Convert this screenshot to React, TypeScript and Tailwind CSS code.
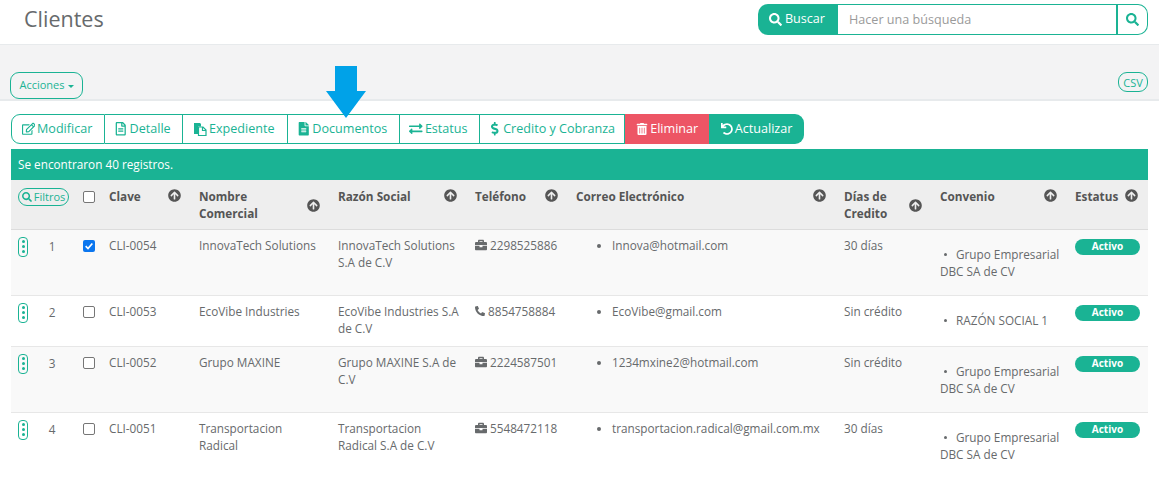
import { ReactNode } from 'react'
import {
  FaArrowCircleUp,
  FaBriefcase,
  FaDollarSign,
  FaExchangeAlt,
  FaFileAlt,
  FaPhoneAlt,
  FaRegEdit,
  FaRegFileAlt,
  FaSearch,
  FaTrashAlt,
  FaUndo
} from 'react-icons/fa'

function FilesIcon() {
  return (
    <svg viewBox="0 0 14 14" className="size-[14px]">
      <path d="M1 1H7L8 2V4.5H5V12H1Z" fill="#1ab394" />
      <path d="M5.5 5H10L13 8V13.500H5.500Z" fill="#fff" stroke="#1ab394" strokeWidth="1.2" />
      <path d="M9.500 5V8.500H13" fill="none" stroke="#1ab394" strokeWidth="1.2" />
    </svg>
  )
}

const ACTIONS = [
  { label: 'Modificar', icon: <FaRegEdit />, width: 'w-[94px]', first: true },
  { label: 'Detalle', icon: <FaRegFileAlt />, width: 'w-[78px]' },
  { label: 'Expediente', icon: <FilesIcon />, width: 'w-[105px]' },
  { label: 'Documentos', icon: <FaFileAlt />, width: 'w-[112px]' },
  { label: 'Estatus', icon: <FaExchangeAlt />, width: 'w-[81px]' },
  { label: 'Credito y Cobranza', icon: <FaDollarSign />, width: 'w-[145px]' }
]

const ROWS = [
  {
    id: 1,
    clave: 'CLI-0054',
    nombre: 'InnovaTech Solutions',
    razon: 'InnovaTech Solutions S.A de C.V',
    phone: '2298525886',
    phoneIcon: 'work',
    correo: 'Innova@hotmail.com',
    dias: '30 días',
    convenio: 'Grupo Empresarial DBC SA de CV',
    height: 'h-[66px]',
    checked: true
  },
  {
    id: 2,
    clave: 'CLI-0053',
    nombre: 'EcoVibe Industries',
    razon: 'EcoVibe Industries S.A de C.V',
    phone: '8854758884',
    phoneIcon: 'phone',
    correo: 'EcoVibe@gmail.com',
    dias: 'Sin crédito',
    convenio: 'RAZÓN SOCIAL 1',
    height: 'h-[51px]',
    checked: false
  },
  {
    id: 3,
    clave: 'CLI-0052',
    nombre: 'Grupo MAXINE',
    razon: 'Grupo MAXINE S.A de C.V',
    phone: '2224587501',
    phoneIcon: 'work',
    correo: '1234mxine2@hotmail.com',
    dias: 'Sin crédito',
    convenio: 'Grupo Empresarial DBC SA de CV',
    height: 'h-[66px]',
    checked: false
  },
  {
    id: 4,
    clave: 'CLI-0051',
    nombre: 'Transportacion Radical',
    razon: 'Transportacion Radical S.A de C.V',
    phone: '5548472118',
    phoneIcon: 'work',
    correo: 'transportacion.radical@gmail.com.mx',
    dias: '30 días',
    convenio: 'Grupo Empresarial DBC SA de CV',
    height: 'h-[66px]',
    checked: false
  }
]

function Th({ children, center }: { children: ReactNode; center?: boolean }) {
  return (
    <th className="pt-[8px] pr-[10px] pb-[6px] pl-2 align-top text-left font-bold text-[#555]">
      <div className={`flex justify-between gap-1 ${center ? 'items-center' : 'items-start'}`}>
        <span className="leading-[17px]">{children}</span>
        <FaArrowCircleUp className={`shrink-0 text-[13px] text-[#555] ${center ? '' : 'mt-[1px]'}`} />
      </div>
    </th>
  )
}

function Checkbox({ checked }: { checked?: boolean }) {
  if (checked) {
    return (
      <span className="flex size-[12px] items-center justify-center rounded-[2px] bg-[#0b76ef]">
        <svg viewBox="0 0 12 12" className="size-[10px]">
          <path d="M2 6.2 4.8 9 10 3" fill="none" stroke="#fff" strokeWidth="2" />
        </svg>
      </span>
    )
  }
  return <span className="block size-[12px] rounded-[2px] border border-[#767676] bg-white" />
}

export default function App() {
  return (
    <div className="relative h-[478px] w-[1159px] overflow-hidden bg-white font-['Open_Sans',sans-serif] text-[11.75px] text-[#676a6c]">
      <header className="flex h-[45px] items-start justify-between border-b border-[#e7eaec] pr-[11px] pl-[24px]">
        <h1 className="mt-[4px] text-[21.5px] leading-[30px] font-normal text-[#676a6c]">Clientes</h1>
        <div className="mt-[4px] flex h-[31px] w-[390px] text-[12.6px]">
          <div className="flex w-[80px] items-center justify-center gap-[3px] rounded-l-[10px] bg-[#1ab394] pr-[2px] text-white">
            <FaSearch className="text-[13px]" />
            Buscar
          </div>
          <div className="flex flex-1 items-center border-y border-[#1ab394] pt-[1px] pl-[11px] text-[#9a9a9a]">
            Hacer una búsqueda
          </div>
          <div className="flex w-[32px] items-center justify-center rounded-r-[10px] border border-l-2 border-[#1ab394] text-[#1ab394]">
            <FaSearch className="text-[13px]" />
          </div>
        </div>
      </header>

      <div className="flex h-[56px] items-start justify-between border-b-2 border-[#e7eaec] bg-[#f3f3f4] pt-[27px] pr-[11px] pl-[10px]">
        <button className="flex h-[27px] w-[73px] items-center justify-center gap-[3px] rounded-[9px] border border-[#1ab394] text-[11px] text-[#1ab394]">
          Acciones
          <span className="mt-[1px] border-x-[3px] border-t-[3px] border-x-transparent border-t-[#1ab394]" />
        </button>
        <button className="h-[20px] w-[30px] rounded-[9px] border border-[#1ab394] text-[11px] leading-none text-[#1ab394]">
          CSV
        </button>
      </div>

      <div className="mt-[13px] ml-[11px] flex h-[30px] w-[793px] text-[12.6px]">
        {ACTIONS.map(action => (
          <button
            key={action.label}
            className={`flex items-center justify-center gap-[2px] border-y border-r border-[#1ab394] pr-[2px] text-[#1ab394] ${action.width} ${action.first ? 'rounded-l-[9px] border-l' : ''}`}
          >
            <span className="text-[13.5px]">{action.icon}</span>
            {action.label}
          </button>
        ))}
        <button className="flex w-[84px] items-center justify-center gap-[2px] bg-[#ed5565] text-white">
          <FaTrashAlt className="text-[12px]" />
          Eliminar
        </button>
        <button className="flex w-[95px] items-center justify-center gap-[2px] rounded-r-[9px] bg-[#1ab394] text-white">
          <FaUndo className="text-[12px]" />
          Actualizar
        </button>
      </div>

      <div className="mx-[11px] mt-[5px]">
        <div className="flex h-[31px] items-center bg-[#1ab394] pl-[7px] text-white">
          Se encontraron 40 registros.
        </div>
        <table className="w-[1137px] table-fixed border-collapse">
          <colgroup>
            <col className="w-[64px]" />
            <col className="w-[26px]" />
            <col className="w-[90px]" />
            <col className="w-[139px]" />
            <col className="w-[137px]" />
            <col className="w-[101px]" />
            <col className="w-[268px]" />
            <col className="w-[96px]" />
            <col className="w-[135px]" />
            <col className="w-[81px]" />
          </colgroup>
          <thead>
            <tr className="h-[49px] border-b border-[#dcdcdc] bg-[#eeeeee]">
              <th className="pt-[8px] pl-[7px] align-top">
                <span className="flex h-[18px] w-[51px] items-center justify-center gap-[2px] rounded-full border border-[#1ab394] text-[11px] font-normal text-[#1ab394]">
                  <FaSearch className="text-[10px]" />
                  Filtros
                </span>
              </th>
              <th className="px-2 pt-[11px] align-top">
                <Checkbox />
              </th>
              <Th>Clave</Th>
              <Th center>
                Nombre
                <br />
                Comercial
              </Th>
              <Th>Razón Social</Th>
              <Th>Teléfono</Th>
              <Th>Correo Electrónico</Th>
              <Th center>
                Días de
                <br />
                Credito
              </Th>
              <Th>Convenio</Th>
              <Th>Estatus</Th>
            </tr>
          </thead>
          <tbody>
            {ROWS.map(row => (
              <tr
                key={row.id}
                className={`${row.height} border-b border-[#e7e7e7] align-top leading-[17px] ${row.id % 2 === 1 ? 'bg-[#f9f9f9]' : 'bg-white'}`}
              >
                <td className="pt-[7px] pl-[7px]">
                  <div className="flex items-center">
                    <span className="flex h-[20px] w-[10px] flex-col items-center justify-center gap-[2px] rounded-[4px] border border-[#1ab394]">
                      <span className="size-[3px] rounded-full bg-[#1ab394]" />
                      <span className="size-[3px] rounded-full bg-[#1ab394]" />
                      <span className="size-[3px] rounded-full bg-[#1ab394]" />
                    </span>
                    <span className="ml-[15px] w-[18px] text-center">{row.id}</span>
                  </div>
                </td>
                <td className="px-2 pt-[10px]">
                  <Checkbox checked={row.checked} />
                </td>
                <td className="px-2 pt-[7px]">{row.clave}</td>
                <td className="px-2 pt-[7px]">{row.nombre}</td>
                <td className="pt-[7px] pr-1 pl-2">{row.razon}</td>
                <td className="px-2 pt-[7px]">
                  <span className="flex items-center gap-[3px]">
                    {row.phoneIcon === 'work' ? (
                      <FaBriefcase className="text-[12px]" />
                    ) : (
                      <FaPhoneAlt className="text-[10px]" />
                    )}
                    {row.phone}
                  </span>
                </td>
                <td className="px-2 pt-[7px]">
                  <ul className="list-disc pl-[36px]">
                    <li>{row.correo}</li>
                  </ul>
                </td>
                <td className="px-2 pt-[7px]">{row.dias}</td>
                <td className="pt-[16px] pr-1 pl-2">
                  <div>
                    <span className="mr-[9px] ml-[4px] inline-block size-[3px] translate-y-[-3px] rounded-full bg-[#676a6c]" />
                    {row.convenio}
                  </div>
                </td>
                <td className="px-2 pt-[9px]">
                  <span className="flex h-[16px] w-[65px] items-center justify-center rounded-full bg-[#1ab394] text-[10px] font-bold text-white">
                    Activo
                  </span>
                </td>
              </tr>
            ))}
          </tbody>
        </table>
      </div>

      <svg viewBox="0 0 40 52" className="absolute top-[66px] left-[326px] h-[52px] w-[40px]">
        <path d="M9 0H31V25H40L20 52 0 25H9Z" fill="#00a2e8" />
      </svg>
    </div>
  )
}
